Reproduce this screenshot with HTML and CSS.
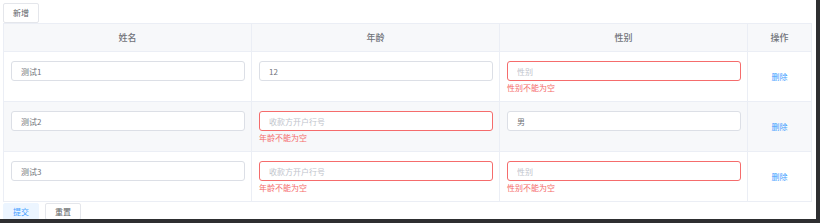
FILE: index.html
```html
<!DOCTYPE html>
<html lang="zh">
<head>
    <meta charset="UTF-8">
    <title>表格表单</title>
    <link rel="stylesheet" href="styles.css">
</head>
<body>
    <div class="page">
        <button class="btn">新增</button>
        <table class="grid">
            <colgroup>
                <col class="col">
                <col class="col">
                <col class="col">
                <col class="col-op">
            </colgroup>
            <thead>
                <tr>
                    <th>姓名</th>
                    <th>年龄</th>
                    <th>性别</th>
                    <th>操作</th>
                </tr>
            </thead>
            <tbody>
                <tr>
                    <td><input class="field" type="text" value="测试1"><div class="err"></div></td>
                    <td><input class="field" type="text" value="12"><div class="err"></div></td>
                    <td><input class="field is-error" type="text" placeholder="性别"><div class="err">性别不能为空</div></td>
                    <td class="op"><a href="#">删除</a></td>
                </tr>
                <tr class="hover">
                    <td><input class="field" type="text" value="测试2"><div class="err"></div></td>
                    <td><input class="field is-error" type="text" placeholder="收款方开户行号"><div class="err">年龄不能为空</div></td>
                    <td><input class="field" type="text" value="男"><div class="err"></div></td>
                    <td class="op"><a href="#">删除</a></td>
                </tr>
                <tr>
                    <td><input class="field" type="text" value="测试3"><div class="err"></div></td>
                    <td><input class="field is-error" type="text" placeholder="收款方开户行号"><div class="err">年龄不能为空</div></td>
                    <td><input class="field is-error" type="text" placeholder="性别"><div class="err">性别不能为空</div></td>
                    <td class="op"><a href="#">删除</a></td>
                </tr>
            </tbody>
        </table>
        <div class="actions">
            <button class="btn btn-primary">提交</button>
            <button class="btn">重置</button>
        </div>
    </div>
</body>
</html>
```

FILE: styles.css
```css
body {
    margin: 0;
    background-color: #2e2f31;
    font-family: "Noto Sans CJK SC", "Noto Sans", sans-serif;
}
.page {
    background-color: #fff;
    width: 813px;
    height: 216px;
    padding: 3px 0 0 3px;
}
.btn {
    display: block;
    height: 20px;
    width: 36px;
    padding: 0;
    border: 1px solid #e4e6eb;
    background-color: #fff;
    color: #606266;
    font-family: inherit;
    font-size: 8px;
    line-height: 18px;
    border-radius: 2px;
    cursor: pointer;
}
.btn-primary {
    background-color: #ecf5ff;
    border-color: #ecf5ff;
    color: #409eff;
}
.grid {
    width: 808px;
    border-collapse: collapse;
    table-layout: fixed;
    border: 1px solid #ebeef5;
}
.col {
    width: 248px;
}
.col-op {
    width: 64px;
}
.grid th {
    height: 27px;
    padding: 0;
    background-color: #f7f8fa;
    color: #707379;
    font-size: 9px;
    font-weight: 500;
    text-align: center;
    border-right: 1px solid #ebeef5;
    border-bottom: 1px solid #ebeef5;
}
.grid td {
    padding: 9px 6px 0 7px;
    vertical-align: top;
    border-right: 1px solid #ebeef5;
    border-bottom: 1px solid #ebeef5;
}
.grid tr.hover td {
    background-color: #f7f8fa;
}
.field {
    display: block;
    box-sizing: border-box;
    width: 100%;
    height: 20px;
    padding: 0 9px;
    border: 1px solid #dcdfe6;
    border-radius: 3px;
    background-color: #fff;
    color: #707379;
    font-family: inherit;
    font-size: 8px;
    outline: none;
}
.field::placeholder {
    color: #c0c4cc;
}
.field.is-error {
    border-color: #f56c6c;
}
.err {
    height: 20px;
    padding-top: 2px;
    box-sizing: border-box;
    color: #f56c6c;
    font-size: 8px;
    line-height: 10px;
}
.grid td.op {
    padding: 0;
    vertical-align: middle;
    text-align: center;
    font-size: 8px;
    line-height: 10px;
}
.op a {
    color: #409eff;
    text-decoration: none;
}
.actions {
    display: flex;
    gap: 6px;
    margin-top: 1px;
}
.actions .btn {
    height: 17px;
    line-height: 15px;
}
```
